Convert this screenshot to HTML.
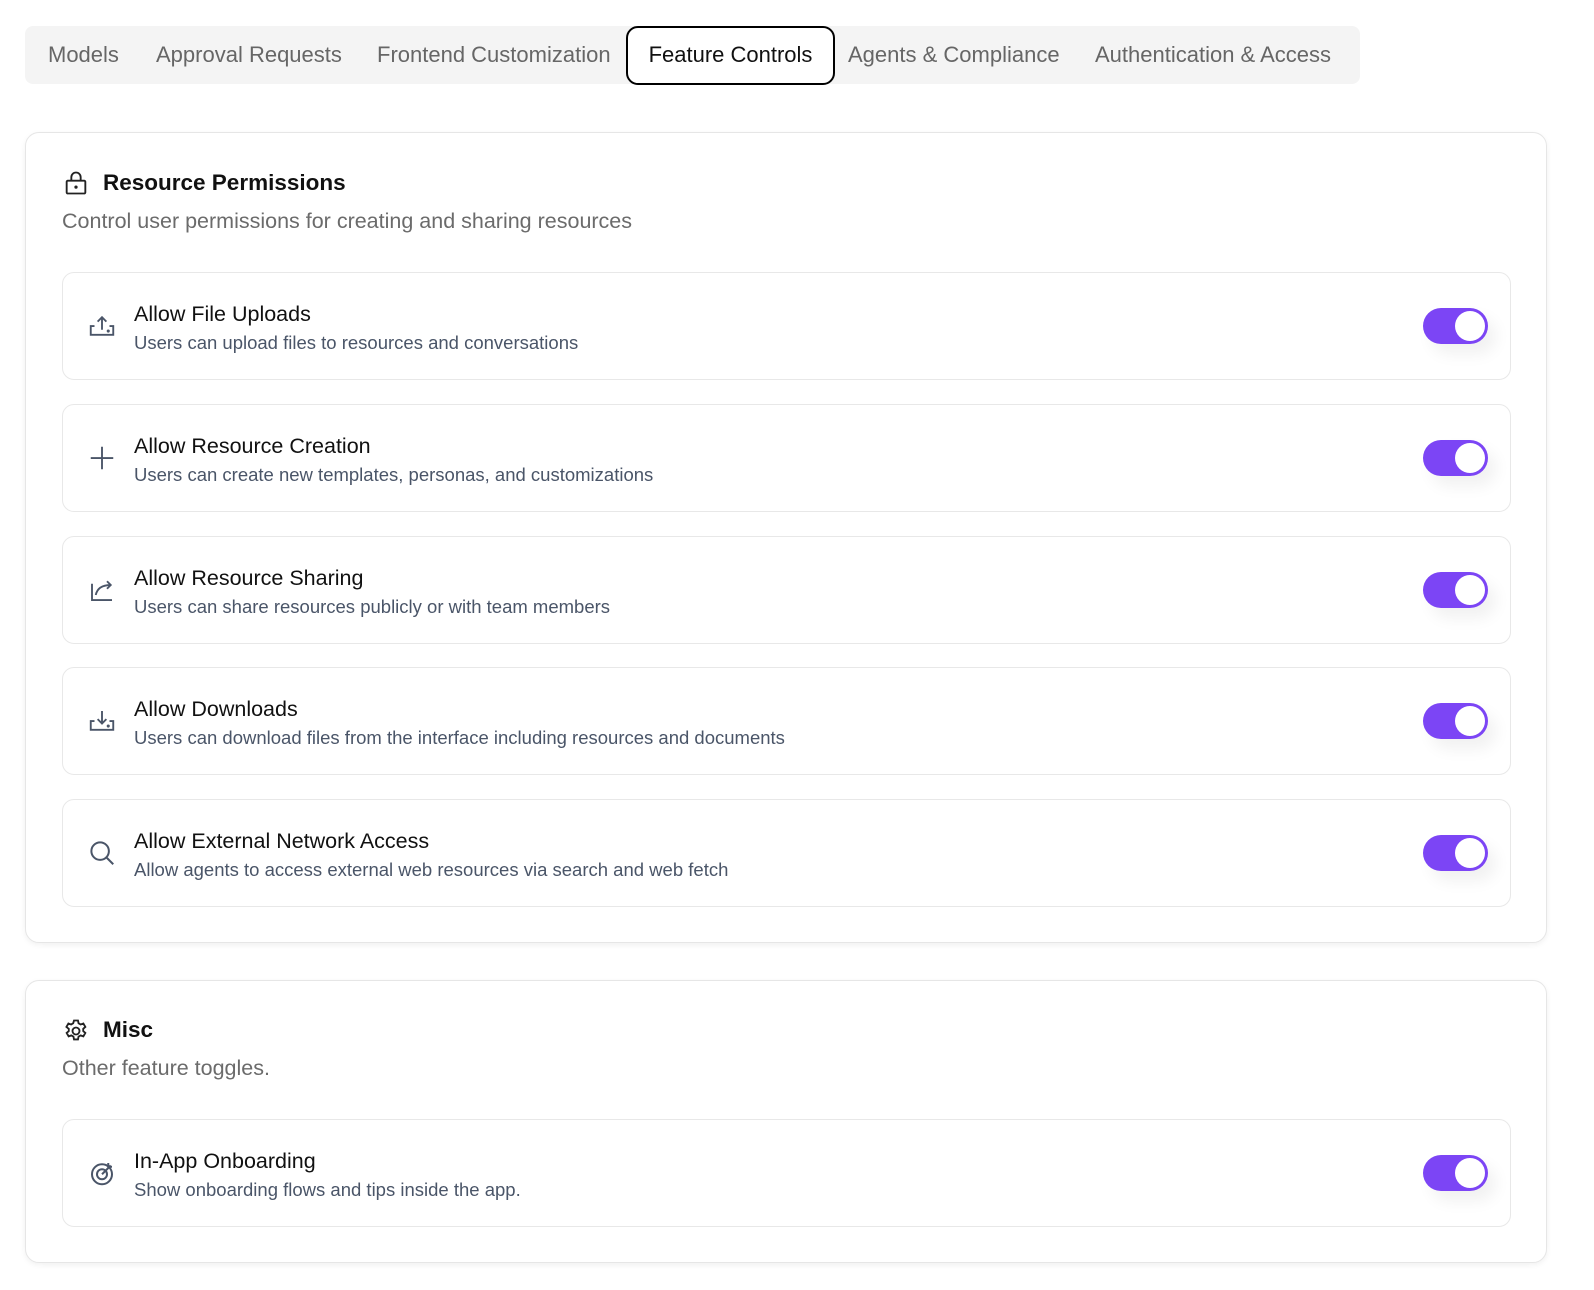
<!DOCTYPE html>
<html><head><meta charset="utf-8"><style>
*{box-sizing:border-box;margin:0;padding:0}
body{width:1594px;height:1290px;background:#fff;font-family:"Liberation Sans",sans-serif;position:relative;overflow:hidden}
.tabs{position:absolute;left:25px;top:26px;width:1335px;height:58px;background:#f4f4f4;border-radius:8px}
.tab{position:absolute;top:0;height:58px;line-height:58px;font-size:22px;color:#666;white-space:nowrap}
.tab.act{top:0;height:59px;border:2.5px solid #000;border-radius:12px;background:#fff;color:#111;line-height:54px;text-align:center}
.card{position:absolute;left:25px;width:1522px;border:1px solid #e6e6e6;border-radius:14px;background:#fff;box-shadow:0 2px 6px rgba(0,0,0,.06)}
.h{position:absolute;left:77px;font-size:22.5px;font-weight:bold;color:#111}
.hi{position:absolute;left:36px}
.sub{position:absolute;left:36px;font-size:21.5px;color:#6b6b6b}
.row{position:absolute;left:36px;width:1449px;height:108px;border:1px solid #e8e8e8;border-radius:12px}
.row svg{position:absolute;left:24px;top:38px}
.t{position:absolute;left:71px;top:29px;font-size:21.5px;color:#111}
.d{position:absolute;left:71px;top:59px;font-size:18.5px;color:#4a5568}
.tg{position:absolute;left:1360px;top:35px;width:65px;height:36px;border-radius:18px;background:#7c45f5;box-shadow:8px 10px 16px rgba(0,0,0,.06)}
.tg::after{content:"";position:absolute;right:3px;top:3px;width:30px;height:30px;border-radius:50%;background:#fff}
</style></head><body>
<div class="tabs">
<div class="tab" style="left:23px">Models</div>
<div class="tab" style="left:131px">Approval Requests</div>
<div class="tab" style="left:352px">Frontend Customization</div>
<div class="tab act" style="left:601px;width:209px">Feature Controls</div>
<div class="tab" style="left:823px">Agents &amp; Compliance</div>
<div class="tab" style="left:1070px">Authentication &amp; Access</div>
</div>

<div class="card" style="top:132px;height:811px">
<svg class="hi" style="top:36px" width="28" height="28" viewBox="0 0 24 24" fill="none" stroke="#222" stroke-width="1.6"><rect x="4" y="10" width="16" height="11" rx="1"/><path d="M8 10V7a4 4 0 0 1 8 0v3"/><circle cx="12" cy="15.5" r=".6" fill="#222"/></svg>
<div class="h" style="top:37px">Resource Permissions</div>
<div class="sub" style="top:76px">Control user permissions for creating and sharing resources</div>

<div class="row" style="top:139px">
<svg width="30" height="30" viewBox="0 0 24 24" fill="none" stroke="#4a5568" stroke-width="1.5"><path d="M6 12H3v7h18v-7h-3M12 15V5M8.5 8.5L12 5l3.5 3.5"/><circle cx="17" cy="16" r=".5" fill="#4a5568"/></svg>
<div class="t">Allow File Uploads</div><div class="d">Users can upload files to resources and conversations</div><div class="tg"></div></div>

<div class="row" style="top:271px">
<svg width="30" height="30" viewBox="0 0 24 24" fill="none" stroke="#4a5568" stroke-width="1.5"><path d="M12 3v18M3 12h18"/></svg>
<div class="t">Allow Resource Creation</div><div class="d">Users can create new templates, personas, and customizations</div><div class="tg"></div></div>

<div class="row" style="top:403px">
<svg width="30" height="30" viewBox="0 0 24 24" fill="none" stroke="#4a5568" stroke-width="1.5"><path d="M4 7v13h16M7 16c1-5 5-8 12-8M16 5l3 3-3 3"/></svg>
<div class="t">Allow Resource Sharing</div><div class="d">Users can share resources publicly or with team members</div><div class="tg"></div></div>

<div class="row" style="top:534px">
<svg width="30" height="30" viewBox="0 0 24 24" fill="none" stroke="#4a5568" stroke-width="1.5"><path d="M6 12H3v7h18v-7h-3M12 4v10M8.5 10.5L12 14l3.5-3.5"/><circle cx="17" cy="16" r=".5" fill="#4a5568"/></svg>
<div class="t">Allow Downloads</div><div class="d">Users can download files from the interface including resources and documents</div><div class="tg"></div></div>

<div class="row" style="top:666px">
<svg width="30" height="30" viewBox="0 0 24 24" fill="none" stroke="#4a5568" stroke-width="1.6"><circle cx="10.5" cy="10.5" r="7"/><path d="M15.5 15.5L21 21"/></svg>
<div class="t">Allow External Network Access</div><div class="d">Allow agents to access external web resources via search and web fetch</div><div class="tg"></div></div>
</div>

<div class="card" style="top:980px;height:283px">
<svg class="hi" style="top:36px" width="28" height="28" viewBox="0 0 24 24" fill="none" stroke="#222" stroke-width="1.6"><path d="M10.3 3h3.4l.5 2.4 1.8 1 2.3-.8 1.7 2.9-1.8 1.6v2l1.8 1.6-1.7 2.9-2.3-.8-1.8 1-.5 2.4h-3.4l-.5-2.4-1.8-1-2.3.8-1.7-2.9 1.8-1.6v-2L3.8 8.5l1.7-2.9 2.3.8 1.8-1z"/><circle cx="12" cy="12" r="3"/></svg>
<div class="h" style="top:36px">Misc</div>
<div class="sub" style="top:75px">Other feature toggles.</div>
<div class="row" style="top:138px">
<svg width="30" height="30" viewBox="0 0 24 24" fill="none" stroke="#4a5568" stroke-width="1.6"><circle cx="12" cy="13" r="8"/><circle cx="12" cy="13" r="4"/><path d="M12 13l7-7M17 4v3h3"/></svg>
<div class="t">In-App Onboarding</div><div class="d">Show onboarding flows and tips inside the app.</div><div class="tg"></div></div>
</div>
</body></html>
